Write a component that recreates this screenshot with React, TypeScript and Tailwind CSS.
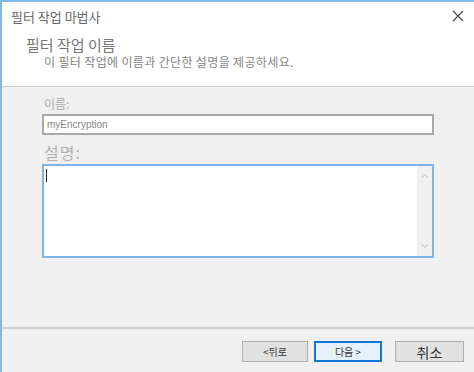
import React from 'react';

const KR = { fontFamily: '"Segoe UI", "Noto Sans CJK KR", "Noto Sans", sans-serif' };

// ── Wizard Dialog ─────────────────────────────────────────────────────────────
export default function App() {
  return (
    <div
      className="w-[474px] h-[372px] bg-[#f0f0f0] border-l-2 border-t-2 border-[#7fbaea] flex flex-col overflow-hidden"
      style={KR}
    >
      {/* Title bar + header */}
      <div className="bg-white h-[85px] border-b border-[#c9c9c9] flex flex-col">
        <div className="flex items-center justify-between h-[28px] pl-[9px] pr-[8px]">
          <span className="text-[13px] text-[#686868] leading-none">필터 작업 마법사</span>
          <svg width="12" height="12" viewBox="0 0 12 12" className="mr-[2px]">
            <path d="M1 1 L11 11 M11 1 L1 11" stroke="#444" strokeWidth="1.1" />
          </svg>
        </div>
        <div className="pl-[24px] pt-[5px] flex flex-col">
          <span className="text-[15px] text-[#767676] leading-[20px]">필터 작업 이름</span>
          <span className="text-[12px] text-[#858585] leading-[14px] pl-[18px] tracking-[0.35px]">
            이 필터 작업에 이름과 간단한 설명을 제공하세요.
          </span>
        </div>
      </div>

      {/* Body */}
      <div className="flex-1 pl-[40px] pr-[40px] pt-[9px]">
        <p className="text-[12px] text-[#aaaaaa] leading-[15px] pl-[2px]">이름:</p>
        <div className="mt-[3px] h-[21px] bg-white border-2 border-[#a9a9a9] flex items-center pl-[3px]">
          <span className="text-[10px] text-[#858585]" style={{ fontFamily: '"Liberation Sans", Arial, sans-serif' }}>
            myEncryption
          </span>
        </div>
        <p className="mt-[8px] text-[16px] text-[#b0b0b0] leading-[19px] pl-[2px] tracking-[1px]">설명:</p>
        <div className="mt-[2px] h-[94px] bg-white border-2 border-[#7eb4ea] flex">
          <div className="flex-1 pl-[2px] pt-[3px]">
            <div className="w-px h-[13px] bg-[#222]" />
          </div>
          <div className="w-[15px] bg-[#f0f0f0] flex flex-col items-center justify-between py-[7px]">
            <svg width="8" height="5" viewBox="0 0 8 5">
              <path d="M1 4.5 L4 1.5 L7 4.5" stroke="#b5b5b5" fill="none" strokeWidth="1" />
            </svg>
            <svg width="8" height="5" viewBox="0 0 8 5">
              <path d="M1 0.5 L4 3.5 L7 0.5" stroke="#b5b5b5" fill="none" strokeWidth="1" />
            </svg>
          </div>
        </div>
      </div>

      {/* Footer */}
      <div className="h-[45px] border-t-2 border-[#cfcfcf] flex items-start justify-end pt-[12px] pr-[10px]">
        <button className="w-[66px] h-[21px] bg-[#e1e1e1] border border-[#adadad] text-[10px] text-[#333] leading-none">
          &lt;뒤로
        </button>
        <button className="ml-[6px] w-[68px] h-[21px] bg-[#e5f1fb] border-2 border-[#0f78d7] text-[10px] text-[#333] leading-none">
          다음 &gt;
        </button>
        <button className="ml-[13px] w-[69px] h-[21px] bg-[#e1e1e1] border border-[#adadad] text-[14px] text-[#333] leading-none">
          취소
        </button>
      </div>
    </div>
  );
}
